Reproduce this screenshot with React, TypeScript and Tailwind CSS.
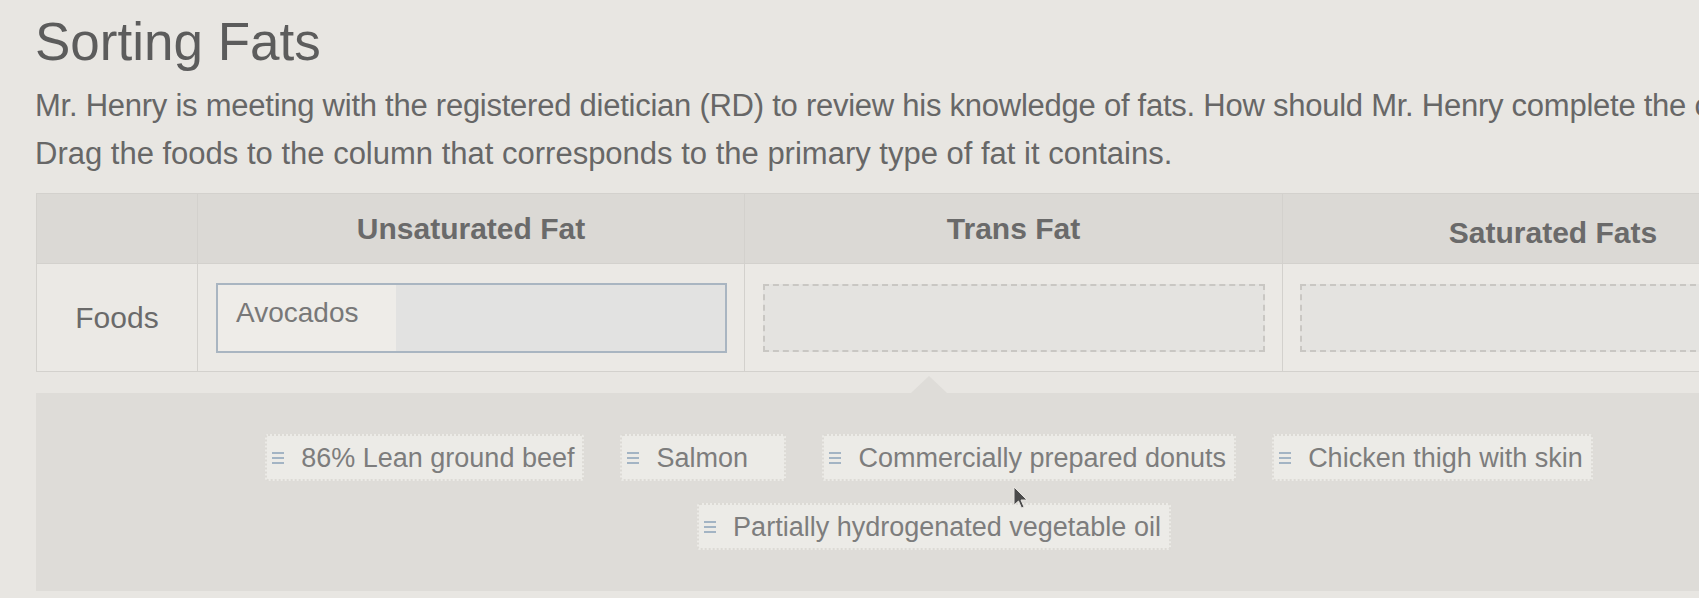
import React from "react";

const font = { fontFamily: '"Liberation Sans", Arial, sans-serif' };

type Chip = { label: string; wide?: boolean };

const rowOne: Chip[] = [
  { label: "86% Lean ground beef" },
  { label: "Salmon", wide: true },
  { label: "Commercially prepared donuts" },
  { label: "Chicken thigh with skin" },
];

const rowTwo: Chip[] = [{ label: "Partially hydrogenated vegetable oil" }];

function Grip() {
  return (
    <svg width="12" height="14" viewBox="0 0 12 14" className="shrink-0">
      <rect x="0" y="1" width="12" height="2" fill="#a3b4c4" />
      <rect x="0" y="6" width="12" height="2" fill="#a3b4c4" />
      <rect x="0" y="11" width="12" height="2" fill="#a3b4c4" />
    </svg>
  );
}

function FoodChip({ label, wide }: Chip) {
  return (
    <div
      className={`flex h-[47px] items-center rounded-[3px] border-2 border-dotted border-[#dcdad5] bg-[#ecebe7] pl-[5px] pr-[8px] ${
        wide ? "min-w-[166px]" : ""
      }`}
    >
      <Grip />
      <span className="ml-[17px] whitespace-nowrap text-[27px] leading-[32px] text-[#7d7d7d]">
        {label}
      </span>
    </div>
  );
}

function Cursor() {
  return (
    <svg
      width="16"
      height="24"
      viewBox="0 0 16 24"
      className="absolute left-[1013px] top-[486px]"
    >
      <path
        d="M1 1 L1 19 L5.5 15 L8.5 22 L11 21 L8 14 L14 14 Z"
        fill="#4a4a4a"
        stroke="#e6e4e0"
        strokeWidth="1"
      />
    </svg>
  );
}

export default function App() {
  return (
    <div
      className="relative h-[598px] w-[1699px] overflow-hidden bg-[#e8e6e2]"
      style={font}
    >
      <div className="w-[1822px] pl-[35px]">
        <h1 className="mt-[16px] text-[53px] leading-[52px] text-[#5c5c5c]">
          Sorting Fats
        </h1>
        <div className="mt-[14px] text-[31px] leading-[48px] text-[#676767]">
          <p className="whitespace-nowrap tracking-[-0.25px]">
            Mr. Henry is meeting with the registered dietician (RD) to review
            his knowledge of fats. How should Mr. Henry complete the chart?
          </p>
          <p className="whitespace-nowrap">
            Drag the foods to the column that corresponds to the primary type
            of fat it contains.
          </p>
        </div>

        {/* matching table */}
        <div className="ml-[1px] mt-[15px] grid grid-cols-[161px_547px_538px_540px] border border-[#d3d1cd] text-[#6a6a6a]">
          <div className="h-[70px] border-r border-b border-[#d3d1cd] bg-[#dbd9d5]" />
          <div className="flex h-[70px] items-center justify-center border-r border-b border-[#d3d1cd] bg-[#dbd9d5] text-[30px] font-bold">
            Unsaturated Fat
          </div>
          <div className="flex h-[70px] items-center justify-center border-r border-b border-[#d3d1cd] bg-[#dbd9d5] text-[30px] font-bold">
            Trans Fat
          </div>
          <div className="flex h-[70px] items-center justify-center border-b border-[#d3d1cd] bg-[#dbd9d5] pt-[8px] text-[30px] font-bold">
            Saturated Fats
          </div>

          <div className="flex h-[107px] items-center justify-center border-r border-[#d3d1cd] bg-[#ebe9e5] text-[30px]">
            Foods
          </div>
          <div className="flex h-[107px] items-center border-r border-[#d3d1cd] bg-[#ebe9e5] pl-[18px] pr-[17px]">
            <div className="flex h-[70px] w-full border-2 border-[#a9b5c1] bg-[#e2e2e1]">
              <div className="w-[178px] bg-[#eeece8] pl-[18px] pt-[12px] text-[28px] leading-[32px] text-[#787878]">
                Avocados
              </div>
            </div>
          </div>
          <div className="flex h-[107px] items-center border-r border-[#d3d1cd] bg-[#ebe9e5] pl-[18px] pr-[17px]">
            <div className="h-[68px] w-full border-2 border-dashed border-[#c9c7c3] bg-[#e4e3e0]" />
          </div>
          <div className="flex h-[107px] items-center bg-[#ebe9e5] pl-[17px] pr-[17px]">
            <div className="h-[68px] w-full border-2 border-dashed border-[#c9c7c3] bg-[#e4e3e0]" />
          </div>
        </div>

        {/* pointer notch */}
        <div className="mt-[4px] flex justify-center">
          <div className="h-0 w-0 border-x-[18px] border-b-[17px] border-x-transparent border-b-[#dedcd8]" />
        </div>

        {/* answer pool */}
        <div className="ml-[1px] flex h-[198px] flex-col items-center justify-center gap-[22px] bg-[#dedcd8]">
          <div className="flex gap-[36px]">
            {rowOne.map((c) => (
              <FoodChip key={c.label} {...c} />
            ))}
          </div>
          <div className="flex gap-[36px] pl-[10px]">
            {rowTwo.map((c) => (
              <FoodChip key={c.label} {...c} />
            ))}
          </div>
        </div>
      </div>
      <Cursor />
    </div>
  );
}
